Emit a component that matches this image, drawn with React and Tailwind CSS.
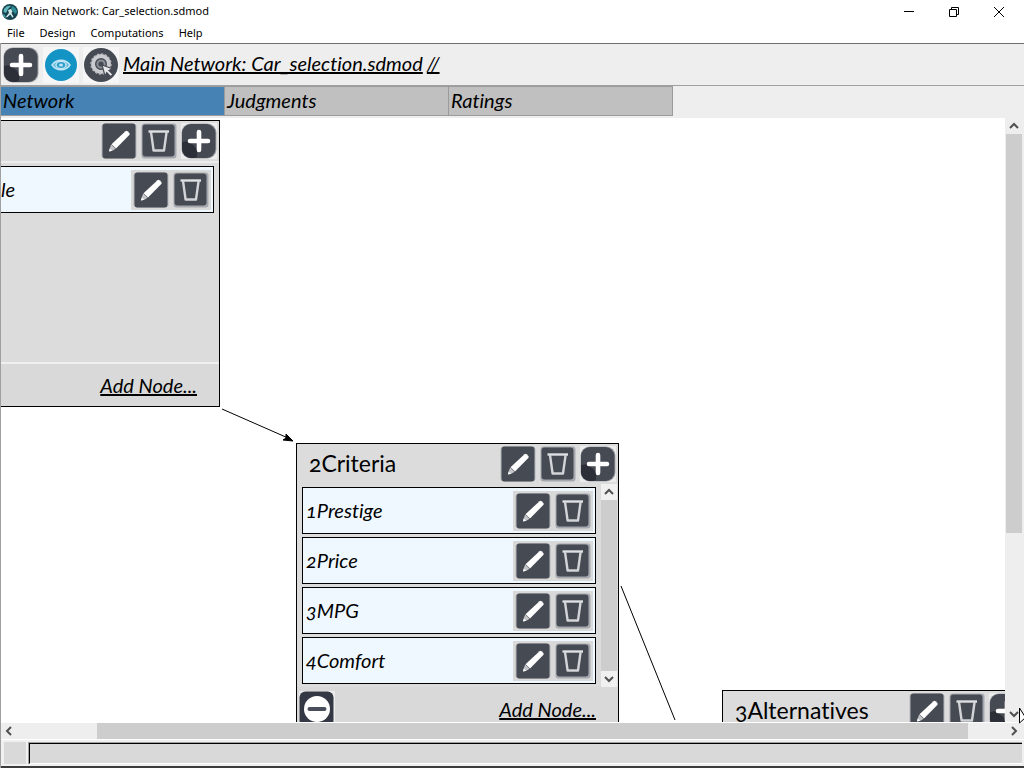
import React, { useState } from "react";
import clsx from "clsx";

const MENUS = ["File", "Design", "Computations", "Help"];
const TABS = ["Network", "Judgments", "Ratings"];
const CRITERIA = ["1Prestige", "2Price", "3MPG", "4Comfort"];

const PencilIcon = () => (
  <svg className="block w-9 h-9" viewBox="0 0 36 36" aria-hidden="true">
    <rect x="0.5" y="0.5" width="35" height="35" rx="3" fill="#b4b6ba" />
    <rect x="1.5" y="0.5" width="33" height="35" rx="3" fill="#464a53" />
    <path d="M24.500 8.200a1.500 1.500 0 012 0l1.800 1.800a1.500 1.500 0 010 2L15 25.500l-4.500-4.300z" fill="#fff" />
    <path d="M10.200 21.600l4.400 4.200-3.200 2-3 .6.400-3.200z" fill="#c3c5c9" />
    <path d="M8.600 25.400l2.600 2.400-3.200.8z" fill="#fff" />
  </svg>
);

const TrashIcon = () => (
  <svg className="block w-9 h-9" viewBox="0 0 36 36" aria-hidden="true">
    <rect x="0.5" y="0.5" width="35" height="35" rx="3" fill="#a4a7ad" />
    <rect x="1.500" y="1.500" width="32" height="32" rx="3" fill="#464a53" />
    <path d="M7.500 8.500h20.500" fill="none" stroke="#dfe1e4" strokeWidth="2.400" />
    <path d="M10 9l2.600 18.500h10.400L25.600 9" fill="none" stroke="#d2d4d8" strokeWidth="2.400" strokeLinejoin="round" />
  </svg>
);

const PlusIcon = () => (
  <svg className="block w-9 h-9" viewBox="0 0 36 36" aria-hidden="true">
    <rect width="36" height="36" fill="#ececec" />
    <rect x="0.5" y="0.5" width="35" height="35" rx="9" fill="#9c9fa5" />
    <rect x="1" y="1" width="33.500" height="34" rx="9" fill="#464a53" />
    <path d="M1 19l7-1 8 8v8l-3 1H10a9 9 0 01-9-9z" fill="#2c2f38" />
    <path d="M18 9v18M9 18h18" stroke="#fff" strokeWidth="4.600" strokeLinecap="round" />
  </svg>
);

const MinusIcon = () => (
  <svg className="block w-9 h-9" viewBox="0 0 36 36" aria-hidden="true">
    <rect width="36" height="36" fill="#ececec" />
    <rect x="0.5" y="0.5" width="34" height="35" rx="6" fill="#343844" />
    <circle cx="18" cy="18" r="13" fill="#fff" />
    <path d="M10.500 18h15" stroke="#4a4e5a" strokeWidth="4" strokeLinecap="round" />
  </svg>
);

const EyeIcon = () => (
  <svg className="block w-9 h-9" viewBox="0 0 36 36" aria-hidden="true">
    <rect width="36" height="36" fill="#f6f6f6" />
    <circle cx="18" cy="18" r="16" fill="#1493c5" />
    <path d="M9 18c4.500-6.400 13.500-6.400 18 0-4.500 6.400-13.500 6.400-18 0z" fill="#5fb9dc" stroke="#c5e7f4" strokeWidth="1.400" />
    <ellipse cx="18" cy="18" rx="5" ry="3.600" fill="#2f9fcc" stroke="#c5e7f4" strokeWidth="1.400" />
    <ellipse cx="18" cy="18" rx="2" ry="1.500" fill="#bfe4f2" />
  </svg>
);

const TargetIcon = () => (
  <svg className="block w-9 h-9" viewBox="0 0 36 36" aria-hidden="true">
    <rect width="36" height="36" fill="#f6f6f6" />
    <circle cx="18" cy="18" r="17" fill="#464a53" />
    <circle cx="18" cy="17" r="8" fill="none" stroke="#c9cbcf" strokeWidth="4" />
    <circle cx="18" cy="17" r="10" fill="none" stroke="#b4b6bb" strokeWidth="1.400" strokeDasharray="2.200 1.700" />
    <circle cx="18" cy="17" r="3.600" fill="none" stroke="#8d9097" strokeWidth="2" />
    <path d="M19 18l10.500 3.800-3.600 1.600 4 4-2.200 2.200-4-4-1.600 3.600z" fill="#e8e9eb" stroke="#464a53" strokeWidth="1.200" />
  </svg>
);

const AppIcon = () => (
  <svg className="w-4 h-4" viewBox="0 0 16 16" aria-hidden="true">
    <circle cx="8" cy="8" r="8" fill="#17424d" />
    <path d="M2 5c2-3 5-4 7-3L6 5 4 9 1.500 8z" fill="#5fb7bd" />
    <path d="M10 2c3 1 4.500 3 5 6l-2 2-2-3-2-2z" fill="#2f8d98" />
    <path d="M6 6l3-1 1.500 2.500L9.500 9l2 4-1.200.6-2-3-3.300 3-1-.8L7 9z" fill="#cfe9ea" />
    <path d="M1 10l2 1 1 3c-2-1-3-2-3-4z" fill="#3fa2aa" />
  </svg>
);

const ARROWS = {
  up: "M4 10l4-4 4 4",
  down: "M4 6l4 4 4-4",
  left: "M10 4L6 8l4 4",
  right: "M6 4l4 4-4 4",
};

const ScrollArrow = ({ dir }) => (
  <button className="flex-none w-4 h-4" aria-label={`Scroll ${dir}`}>
    <svg className="block w-4 h-4" viewBox="0 0 16 16" fill="none" stroke="#505050" strokeWidth="2">
      <path d={ARROWS[dir]} />
    </svg>
  </button>
);

const IconButton = ({ label, children }) => (
  <button aria-label={label} className="flex-none w-9 h-9">{children}</button>
);

const NodeRow = ({ name, flush }) => (
  <div className={clsx("flex items-center h-[47px] bg-[#f0f8ff] border border-black", flush ? "border-l-0" : "pl-[3px]")}>
    <span className="flex-1 pb-0.5 italic text-xl">{name}</span>
    <div className="flex gap-1 p-0.5 mr-0.5 bg-[#d9d9d9]">
      <IconButton label={`Edit ${name}`}><PencilIcon /></IconButton>
      <IconButton label={`Delete ${name}`}><TrashIcon /></IconButton>
    </div>
  </div>
);

const Cluster = ({ title, nodes, flush, scroll, className }) => (
  <section className={clsx("absolute flex flex-col bg-[#dcdcdc] border border-black", flush && "border-l-0", className)}>
    <header className="flex items-center h-10 pl-3 pr-0.5 gap-1">
      <h2 className="flex-1 pb-0.5 text-[23px] leading-6">{title}</h2>
      <IconButton label="Edit cluster"><PencilIcon /></IconButton>
      <IconButton label="Delete cluster"><TrashIcon /></IconButton>
      <IconButton label="Add to cluster"><PlusIcon /></IconButton>
    </header>
    <div className={clsx("flex flex-1 min-h-0", flush && "border-t-2 border-[#ececec]")}>
      <div className={clsx("flex flex-col flex-1 gap-[3px] pt-[3px] pr-[5px]", !flush && "pl-[5px]")}>
        {nodes.map((n) => <NodeRow key={n} name={n} flush={flush} />)}
      </div>
      {scroll && (
        <div className="flex flex-col w-4 bg-[#f0f0f0] mr-px">
          <ScrollArrow dir="up" />
          <div className="flex-1 bg-[#cdcdcd]" />
          <ScrollArrow dir="down" />
        </div>
      )}
    </div>
    {nodes.length > 0 && (
      <footer className={clsx("flex items-center justify-between h-11 bg-[#d9d9d9] pl-0.5 pr-[22px]", flush && "border-t-2 border-[#f0f0f0]")}>
        {scroll ? <IconButton label="Collapse"><MinusIcon /></IconButton> : <span />}
        <a href="#add" className="italic underline text-xl leading-7">Add Node...</a>
      </footer>
    )}
  </section>
);

const TitleBar = () => (
  <div className="flex items-center h-[23px] pl-0.5 pr-[19px] font-['Noto_Sans',sans-serif] text-[11px]">
    <AppIcon />
    <h1 className="flex-1 pl-[5px]">Main Network: Car_selection.sdmod</h1>
    <div className="flex gap-[33px]">
      <button aria-label="Minimize">
        <svg className="block w-3 h-3" viewBox="0 0 12 12" stroke="#000"><path d="M1 5.500h10" /></svg>
      </button>
      <button aria-label="Restore">
        <svg className="block w-3 h-3" viewBox="0 0 12 12" fill="none" stroke="#000">
          <path d="M1.500 3.500h7v7h-7zM3.500 3.500v-2h7v7h-2" />
        </svg>
      </button>
      <button aria-label="Close">
        <svg className="block w-3 h-3" viewBox="0 0 12 12" stroke="#000"><path d="M1 1l10 10M11 1L1 11" /></svg>
      </button>
    </div>
  </div>
);

export default function App() {
  const [tab, setTab] = useState("Network");

  return (
    <div className="flex flex-col h-screen overflow-hidden bg-white text-black font-['Lato',sans-serif] oldstyle-nums [font-feature-settings:'liga'_0]">
      <TitleBar />
      <nav className="flex items-center h-5 gap-[15px] pl-[7px] font-['Noto_Sans',sans-serif] text-[11px]">
        {MENUS.map((m) => <button key={m}>{m}</button>)}
      </nav>

      <div className="flex flex-col flex-1 min-h-0 bg-[#eeeeee] border-l border-[#a0a0a0]">
        {/* Toolbar */}
        <div className="flex items-center h-[42px] pl-0.5 gap-1 border-t border-[#6e6e6e]">
          <IconButton label="Add cluster"><PlusIcon /></IconButton>
          <IconButton label="Show"><EyeIcon /></IconButton>
          <IconButton label="Select"><TargetIcon /></IconButton>
          <div className="flex gap-1 pb-1 italic text-xl leading-7">
            <a href="#network" className="underline">Main Network: Car_selection.sdmod</a>
            <a href="#root" className="underline">//</a>
          </div>
        </div>

        <div role="tablist" className="flex h-[33px] border-t border-[#a0a0a0]">
          {TABS.map((t) => (
            <button
              key={t}
              role="tab"
              aria-selected={tab === t}
              onClick={() => setTab(t)}
              className={clsx(
                "w-56 h-[30px] pl-0.5 pb-0.5 text-left text-xl leading-6 italic border-r border-y border-[#9b9b9b]",
                tab === t ? "bg-[#4682b4]" : "bg-[#c0c0c0]"
              )}
            >
              {t}
            </button>
          ))}
        </div>

        <div className="flex flex-1 min-h-0">
          {/* Network canvas */}
          <main className="relative flex-1 overflow-hidden bg-white">
            <Cluster title="" nodes={["le"]} flush className="left-0 top-0.5 w-[219px] h-[287px]" />
            <Cluster title="2Criteria" nodes={CRITERIA} scroll className="left-[295px] top-[325px] w-[323px] h-[289px]" />
            <Cluster title="3Alternatives" nodes={[]} className="left-[721px] top-[572px] w-[306px] h-[287px]" />
            <svg className="absolute left-0 top-0 w-[720px] h-[603px] pointer-events-none" viewBox="0 0 720 603" stroke="#000">
              <path d="M221 291l66 29M620 468l54 134" fill="none" />
              <path d="M292 323l-10-1 3-2 0-4z" />
            </svg>
          </main>
          <div className="flex flex-col w-4 ml-px mr-0.5">
            <ScrollArrow dir="up" />
            <div className="h-[399px] bg-[#cdcdcd]" />
            <div className="flex-1" />
            <ScrollArrow dir="down" />
          </div>
        </div>

        <div className="flex items-center h-[18px] pr-0.5 border-y border-white">
          <ScrollArrow dir="left" />
          <div className="flex-1 h-full pl-20 pr-[38px]">
            <div className="h-full bg-[#cdcdcd]" />
          </div>
          <ScrollArrow dir="right" />
        </div>

        {/* Status bar */}
        <div className="flex items-center h-7 gap-0.5 pl-[3px] pr-0.5 bg-[#f0f0f0] border-b-2 border-[#3c3c3c]">
          <div className="w-[22px] h-[22px] bg-[#d9d9d9]" />
          <div className="flex-1 h-[22px] border-t border-l border-[#a0a0a0]">
            <div className="h-full bg-[#d9d9d9] border-t border-l border-black border-b border-b-white" />
          </div>
        </div>
      </div>

      <svg className="absolute right-0 bottom-[42px] w-[6px] h-5" viewBox="0 0 6 20" aria-hidden="true">
        <path d="M1.500 2v15l6-5.500z" fill="#fff" stroke="#000" />
      </svg>
    </div>
  );
}
